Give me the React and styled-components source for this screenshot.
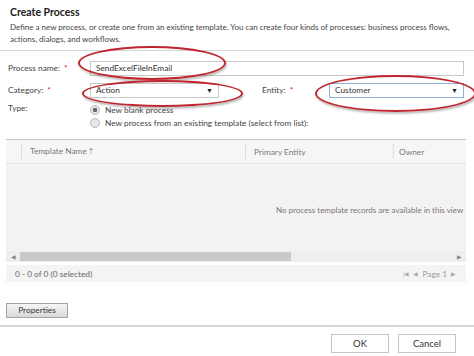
import styled, { createGlobalStyle } from 'styled-components'

const GlobalStyle = createGlobalStyle`
  body {
    margin: 0;
    background: #fff;
    font-family: Lato, "Open Sans", sans-serif;
    color: #333;
  }
`

const Dialog = styled.div`
  position: relative;
  width: 474px;
  height: 356px;
  overflow: hidden;
  background: #fff;
`

const Header = styled.div`
  padding: 5px 10px 0;
  height: 51px;
  box-sizing: border-box;
  border-bottom: 1px solid #d6d6d6;
`

const Title = styled.div`
  font-size: 10.5px;
  font-weight: 700;
  color: #222;
  line-height: 14px;
`

const Desc = styled.div`
  margin-top: 2px;
  font-size: 8px;
  line-height: 12px;
  color: #444;
`

const Form = styled.div`
  padding: 6px 8px 0 8px;
  height: 88px;
  box-sizing: border-box;
`

const Row = styled.div`
  display: flex;
  align-items: center;
  height: 22px;
`

const Label = styled.div`
  width: ${p => p.w || 82}px;
  margin-left: ${p => p.ml || 0}px;
  font-size: 8.3px;
  color: #444;
  flex: none;
`

const Star = styled.span`
  color: #d4252d;
  margin-left: 4px;
`

const Input = styled.div`
  flex: ${p => (p.w ? 'none' : 1)};
  width: ${p => (p.w ? p.w + 'px' : 'auto')};
  height: 15px;
  box-sizing: border-box;
  border: 1px solid ${p => (p.focus ? '#8fb2d9' : '#c8c8c8')};
  background: #fff;
  display: flex;
  align-items: center;
  justify-content: space-between;
  padding: 0 5px;
  font-size: 8.3px;
  color: #333;
  margin-right: ${p => p.mr || 0}px;
`

const Arrow = styled.span`
  font-size: 7px;
  color: #222;
`

const TypeRow = styled.div`
  display: flex;
  padding-top: 2px;
`

const Radios = styled.div`
  display: flex;
  flex-direction: column;
`

const RadioLine = styled.div`
  display: flex;
  align-items: center;
  height: 13px;
  font-size: 8.3px;
  color: #444;
`

const Radio = styled.span`
  width: 8px;
  height: 8px;
  border-radius: 50%;
  border: 1px solid #b8b8b8;
  background: ${p => (p.on ? 'radial-gradient(circle, #666 0 2px, #e8e8e8 2.5px)' : '#e6e6e6')};
  margin-right: 5px;
  flex: none;
`

const Grid = styled.div`
  margin: 0 8px 0 6px;
  border-top: 1px solid #c9c9c9;
`

const GridHead = styled.div`
  display: flex;
  height: 23px;
  background: #f7f6f6;
  border-bottom: 1px solid #e6e4e4;
`

const HeadCell = styled.div`
  width: ${p => p.w}px;
  flex: none;
  box-sizing: border-box;
  border-left: ${p => (p.sep ? '1px solid #dedede' : 'none')};
  display: flex;
  align-items: center;
  padding-left: ${p => p.pl || 8}px;
  font-size: 8.3px;
  color: #777;
  margin: 4px 0;
`

const GridBody = styled.div`
  height: 87px;
  background: #f4f2f2;
  display: flex;
  align-items: center;
  padding-left: 270px;
  white-space: nowrap;
  overflow: hidden;
  font-size: 8px;
  color: #777;
  padding-top: 4px;
  box-sizing: border-box;
`

const ScrollBar = styled.div`
  display: flex;
  align-items: center;
  height: 11px;
  background: #eeeeee;
  font-size: 6px;
  color: #888;
`

const ScrollBtn = styled.span`
  width: 14px;
  text-align: center;
  flex: none;
`

const Thumb = styled.div`
  width: 271px;
  height: 9px;
  background: #c9c9c9;
`

const Track = styled.div`
  flex: 1;
`

const GridFooter = styled.div`
  display: flex;
  justify-content: space-between;
  align-items: center;
  height: 17px;
  margin-top: 3px;
  background: #f5f4f4;
  padding: 0 10px 0 9px;
  font-size: 8.3px;
  color: #666;
`

const Pager = styled.div`
  display: flex;
  align-items: center;
  gap: 4px;
  color: #999;
  font-size: 8.3px;
`

const PagerIcon = styled.span`
  font-size: 6px;
  color: #aaa;
`

const PropsBar = styled.div`
  padding: 15px 0 0 6px;
  height: 43px;
  box-sizing: border-box;
`

const PropsButton = styled.button`
  width: 62px;
  height: 15px;
  padding: 0;
  border: 1px solid #a5a5a5;
  background: linear-gradient(#f6f6f6, #d9d9d9);
  font-family: inherit;
  font-size: 8.3px;
  color: #333;
`

const Footer = styled.div`
  border-top: 2px solid #d6d6d6;
  display: flex;
  justify-content: flex-end;
  gap: 9px;
  padding: 7px 18px 0 0;
`

const DlgButton = styled.button`
  width: 58px;
  height: 19px;
  padding: 0;
  border: 1px solid #c6c6c6;
  background: #fff;
  font-family: inherit;
  font-size: 9.5px;
  color: #333;
`

const Mark = styled.div`
  position: absolute;
  border: 2px solid #c0262e;
  border-radius: 50%;
  box-shadow: 1px 2px 2px rgba(0, 0, 0, 0.25);
  pointer-events: none;
`

const marks = [
  { left: 78, top: 46, width: 144, height: 30 },
  { left: 82, top: 80, width: 157, height: 23 },
  { left: 315, top: 75, width: 157, height: 33 },
]

export default function App() {
  return (
    <Dialog>
      <GlobalStyle />
      <Header>
        <Title>Create Process</Title>
        <Desc>
          Define a new process, or create one from an existing template. You can create four kinds of processes: business process flows,
          actions, dialogs, and workflows.
        </Desc>
      </Header>
      <Form>
        <Row>
          <Label>Process name:<Star>*</Star></Label>
          <Input mr={2}>SendExcelFileInEmail</Input>
        </Row>
        <Row>
          <Label>Category:<Star>*</Star></Label>
          <Input w={129}>Action<Arrow>▼</Arrow></Input>
          <Label w={67} ml={43}>Entity:<Star>*</Star></Label>
          <Input w={135} focus>Customer<Arrow>▼</Arrow></Input>
        </Row>
        <TypeRow>
          <Label>Type:</Label>
          <Radios>
            <RadioLine><Radio on />New blank process</RadioLine>
            <RadioLine><Radio />New process from an existing template (select from list):</RadioLine>
          </Radios>
        </TypeRow>
      </Form>
      <Grid>
        <GridHead>
          <HeadCell w={15} />
          <HeadCell w={224} sep>Template Name&nbsp;🡑</HeadCell>
          <HeadCell w={148} sep>Primary Entity</HeadCell>
          <HeadCell w={73} sep pl={5}>Owner</HeadCell>
        </GridHead>
        <GridBody>No process template records are available in this view</GridBody>
        <ScrollBar>
          <ScrollBtn>◀</ScrollBtn>
          <Thumb />
          <Track />
          <ScrollBtn>▶</ScrollBtn>
        </ScrollBar>
        <GridFooter>
          <span>0 - 0 of 0 (0 selected)</span>
          <Pager>
            <PagerIcon>|◀</PagerIcon>
            <PagerIcon>◀</PagerIcon>
            <span>Page 1</span>
            <PagerIcon>▶</PagerIcon>
          </Pager>
        </GridFooter>
      </Grid>
      <PropsBar>
        <PropsButton>Properties</PropsButton>
      </PropsBar>
      <Footer>
        <DlgButton>OK</DlgButton>
        <DlgButton>Cancel</DlgButton>
      </Footer>
      {marks.map((m, i) => (
        <Mark key={i} style={m} />
      ))}
    </Dialog>
  )
}
